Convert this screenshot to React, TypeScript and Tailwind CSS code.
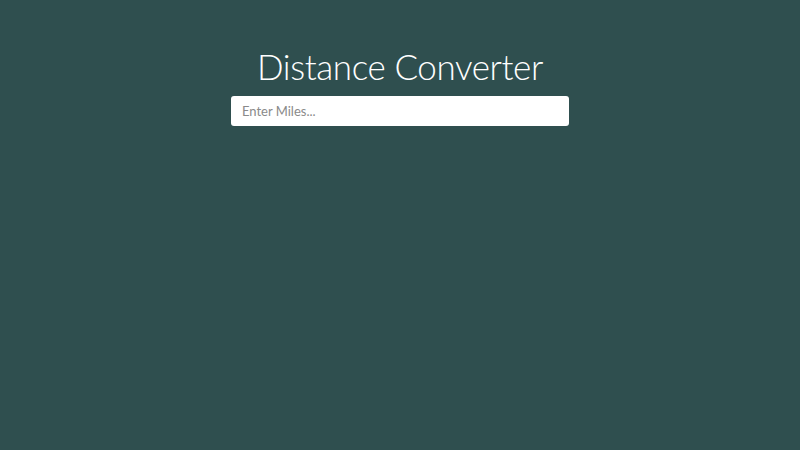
export default function App() {
  return (
    <div className="min-h-screen bg-[#2f4f4f] font-['Lato',sans-serif]">
      <div className="flex flex-col items-center pt-[44px]">
        <h1 className="text-[35px] leading-[44px] font-light tracking-[-0.4px] text-white">Distance Converter</h1>
        <input
          type="text"
          placeholder="Enter Miles..."
          className="mt-[8px] h-[30px] w-[338px] rounded-[3px] bg-white px-[11px] text-[13px] text-gray-700 placeholder:text-[#8a8a8a] outline-none"
        />
      </div>
    </div>
  );
}
